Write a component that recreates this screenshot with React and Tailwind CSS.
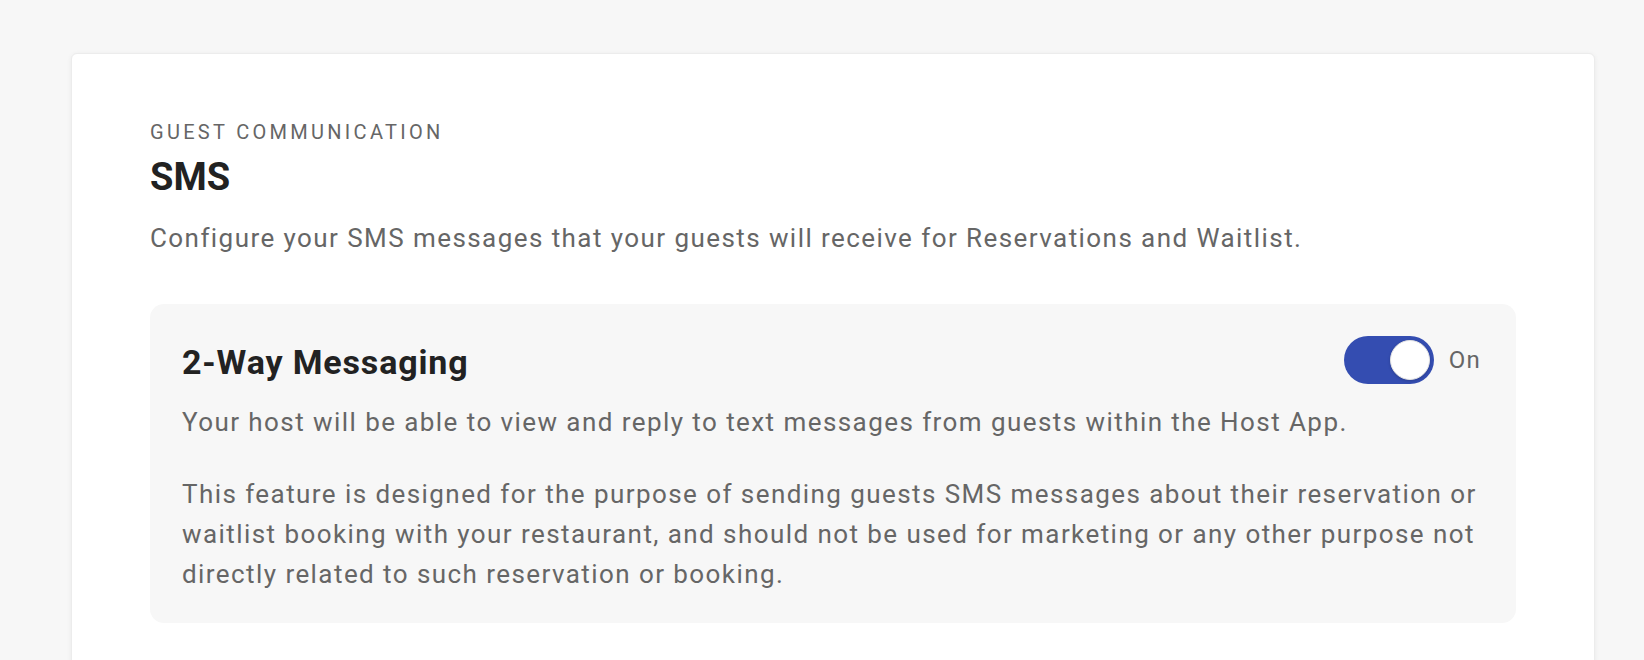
import React, { useState } from 'react';

const Toggle = ({ on, onChange }) => (
  <button
    onClick={() => onChange(!on)}
    className={`relative w-[90px] h-[48px] rounded-full shrink-0 transition-colors ${on ? 'bg-[#344db1]' : 'bg-[#c9c9c9]'}`}
  >
    <span
      className={`absolute top-[4px] w-[40px] h-[40px] rounded-full bg-white border border-[#e3e3e3] shadow-[0_1px_3px_rgba(0,0,0,0.18)] transition-all ${on ? 'left-[46px]' : 'left-[4px]'}`}
    />
  </button>
);

const App = () => {
  const [twoWay, setTwoWay] = useState(true);

  return (
    <div
      className="h-[660px] overflow-hidden bg-[#f7f7f7] pt-[53px] pl-[71px] pr-[49px]"
      style={{ fontFamily: 'Roboto, "Noto Sans", sans-serif' }}
    >
      {/* --- CARD --- */}
      <div className="bg-white rounded-md border border-[#ececec] shadow-[0_1px_5px_rgba(0,0,0,0.06)] px-[78px] pt-[64px] pb-[80px]">
        <p className="text-[20px] leading-[28px] tracking-[0.165em] uppercase text-[#666]">Guest Communication</p>
        <h1 className="mt-[9px] text-[38px] leading-[44px] font-bold text-[#222]">SMS</h1>
        <p className="mt-[21px] text-[26px] leading-[36px] tracking-[0.055em] text-[#666]">
          Configure your SMS messages that your guests will receive for Reservations and Waitlist.
        </p>

        {/* 2-WAY MESSAGING */}
        <section className="mt-[48px] bg-[#f7f7f7] rounded-[14px] px-[32px] pt-[32px] pb-[29px]">
          <div className="flex items-start justify-between">
            <h2 className="mt-[6px] text-[34px] leading-[40px] font-bold tracking-[0.025em] text-[#222]">2-Way Messaging</h2>
            <div className="flex items-center gap-[15px]">
              <Toggle on={twoWay} onChange={setTwoWay} />
              <span className="text-[24px] leading-[32px] tracking-[0.05em] text-[#666] pr-[3px]">{twoWay ? 'On' : 'Off'}</span>
            </div>
          </div>
          <p className="mt-[18px] text-[26px] leading-[40px] tracking-[0.055em] text-[#666]">
            Your host will be able to view and reply to text messages from guests within the Host App.
          </p>
          <p className="mt-[32px] text-[26px] leading-[40px] tracking-[0.055em] text-[#666]">
            This feature is designed for the purpose of sending guests SMS messages about their reservation or
            waitlist booking with your restaurant, and should not be used for marketing or any other purpose not
            directly related to such reservation or booking.
          </p>
        </section>
      </div>
    </div>
  );
};

export default App;
